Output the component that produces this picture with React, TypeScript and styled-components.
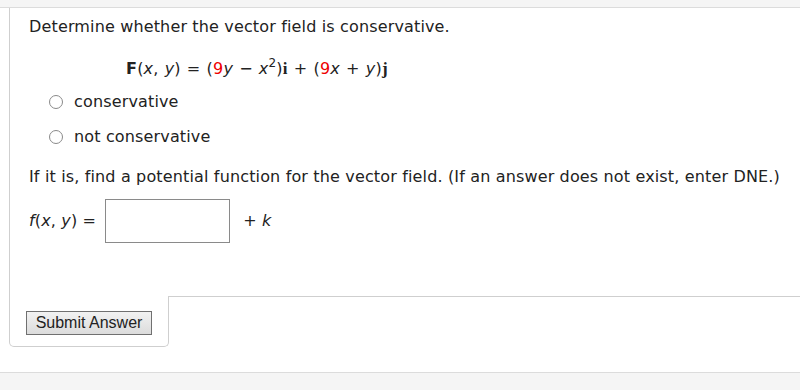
import React from 'react';
import styled, { createGlobalStyle } from 'styled-components';

const GlobalStyle = createGlobalStyle`
  html, body {
    margin: 0;
    padding: 0;
    background: #fff;
  }
  body {
    font-family: "DejaVu Sans", Verdana, sans-serif;
    color: #222;
  }
`;

const TopBar = styled.div`
  height: 7px;
  background: #f5f5f5;
  border-bottom: 1px solid #dcdcdc;
`;

const Page = styled.div`
  padding-left: 9px;
`;

const QuestionBox = styled.div`
  border-left: 1px solid #cfcfcf;
  padding: 9px 0 0 19px;
  height: 288px;
  box-sizing: border-box;
  font-size: 16px;
  letter-spacing: 0.15px;
`;

const Prompt = styled.p`
  margin: 0;
  line-height: 20px;
`;

const Formula = styled.div`
  margin: 22px 0 0 97px;
  line-height: 20px;
  letter-spacing: 0.2px;
  word-spacing: 0.8px;
`;

const Bold = styled.b`
  font-weight: bold;
`;

const Var = styled.i`
  font-style: italic;
`;

const Coef = styled.span`
  color: #e00;
`;

const UnitVec = styled.b`
  font-family: "Liberation Serif", "Times New Roman", serif;
  font-weight: bold;
  font-size: 17px;
`;

const Sup = styled.sup`
  font-size: 12px;
  line-height: 0;
  vertical-align: 7px;
`;

const OptionList = styled.div`
  display: flex;
  flex-direction: column;
  gap: 15px;
  margin: 13px 0 0 20px;
`;

const Option = styled.label`
  display: flex;
  align-items: center;
  gap: 11px;
  line-height: 20px;
`;

const Radio = styled.span`
  width: 12px;
  height: 12px;
  border: 1px solid #8a8a8a;
  border-radius: 50%;
  background: #fff;
`;

const Instruction = styled.p`
  margin: 20px 0 0;
  line-height: 20px;
`;

const AnswerRow = styled.div`
  display: flex;
  align-items: center;
  margin-top: 12px;
  line-height: 20px;
`;

const AnswerInput = styled.input`
  width: 125px;
  height: 44px;
  box-sizing: border-box;
  border: 1px solid #8a8a8a;
  margin: 0 13px 0 9px;
  padding: 0 4px;
  font: inherit;
`;

const Footer = styled.div`
  display: flex;
`;

const SubmitTab = styled.div`
  width: 160px;
  box-sizing: border-box;
  border: 1px solid #cfcfcf;
  border-top: none;
  border-radius: 0 0 5px 5px;
  padding: 15px 0 11px 16px;
`;

const Filler = styled.div`
  flex: 1;
  border-top: 1px solid #cfcfcf;
`;

const SubmitButton = styled.button`
  font-family: "Liberation Sans", Arial, sans-serif;
  font-size: 16px;
  color: #222;
  height: 24px;
  width: 126px;
  padding: 0;
  border: 1px solid #707070;
  border-radius: 0;
  background: linear-gradient(#f2f2f2, #dcdcdc);
`;

const BottomBar = styled.div`
  margin-top: 25px;
  height: 18px;
  background: #f5f5f5;
  border-top: 1px solid #dcdcdc;
`;

export default function App() {
  return (
    <>
      <GlobalStyle />
      <TopBar />
      <Page>
        <QuestionBox>
          <Prompt>Determine whether the vector field is conservative.</Prompt>
          <Formula>
            <Bold>F</Bold>(<Var>x</Var>, <Var>y</Var>) = (<Coef>9</Coef><Var>y</Var> − <Var>x</Var>
            <Sup>2</Sup>)<UnitVec>i</UnitVec> + (<Coef>9</Coef><Var>x</Var> + <Var>y</Var>)<UnitVec>j</UnitVec>
          </Formula>
          <OptionList>
            <Option>
              <Radio />
              conservative
            </Option>
            <Option>
              <Radio />
              not conservative
            </Option>
          </OptionList>
          <Instruction>
            If it is, find a potential function for the vector field. (If an answer does not exist, enter DNE.)
          </Instruction>
          <AnswerRow>
            <span>
              <Var>f</Var>(<Var>x</Var>, <Var>y</Var>) =
            </span>
            <AnswerInput type="text" />
            <span>
              + <Var>k</Var>
            </span>
          </AnswerRow>
        </QuestionBox>
        <Footer>
          <SubmitTab>
            <SubmitButton>Submit Answer</SubmitButton>
          </SubmitTab>
          <Filler />
        </Footer>
      </Page>
      <BottomBar />
    </>
  );
}
